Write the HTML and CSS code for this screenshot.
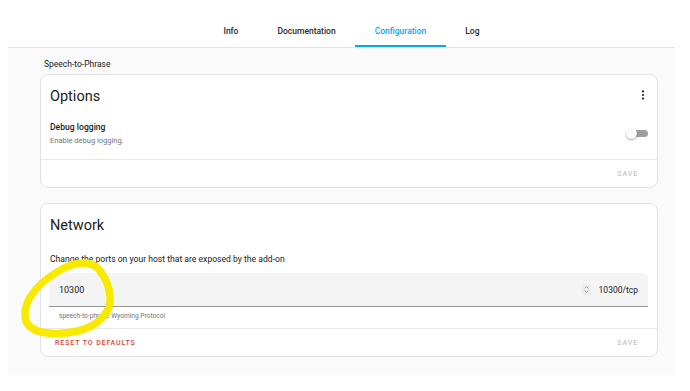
FILE: index.html
```html
<!DOCTYPE html>
<html lang="en">
<head>
  <meta charset="UTF-8">
  <meta name="viewport" content="width=device-width, initial-scale=1.0">
  <title>Speech-to-Phrase - Configuration</title>
  <link rel="stylesheet" href="styles.css">
</head>
<body>
  <div class="page">
    <div class="tabs">
      <div class="tab">Info</div>
      <div class="tab">Documentation</div>
      <div class="tab active">Configuration</div>
      <div class="tab">Log</div>
    </div>

    <div class="content">
      <div class="addon-name">Speech-to-Phrase</div>

      <div class="card">
        <div class="card-header">
          <span class="card-title">Options</span>
          <svg class="kebab" width="4" height="10" viewBox="0 0 4 10">
            <circle cx="2" cy="1.4" r="1.1" fill="#212121"/>
            <circle cx="2" cy="5" r="1.1" fill="#212121"/>
            <circle cx="2" cy="8.6" r="1.1" fill="#212121"/>
          </svg>
        </div>
        <div class="card-content">
          <div class="option-row">
            <div>
              <div class="option-name">Debug logging</div>
              <div class="option-desc">Enable debug logging.</div>
            </div>
            <div class="switch"><div class="knob"></div></div>
          </div>
        </div>
        <div class="card-actions">
          <span></span>
          <span class="btn disabled">Save</span>
        </div>
      </div>

      <div class="card">
        <div class="card-header">
          <span class="card-title">Network</span>
        </div>
        <div class="card-content">
          <div class="network-text">Change the ports on your host that are exposed by the add-on</div>
          <div class="field">
            <span class="field-value">10300</span>
            <svg class="spinner" width="9" height="11" viewBox="0 0 9 11">
              <rect width="9" height="11" rx="1" fill="#ececec"/>
              <path d="M2.8 4.3 L4.5 2.6 L6.2 4.3 M2.8 6.7 L4.5 8.4 L6.2 6.7" fill="none" stroke="#8a8a8a" stroke-width="0.8"/>
            </svg>
            <span class="field-suffix">10300/tcp</span>
          </div>
          <div class="field-helper">speech-to-phrase Wyoming Protocol</div>
        </div>
        <div class="card-actions">
          <span class="btn warning">Reset to defaults</span>
          <span class="btn disabled">Save</span>
        </div>
      </div>
    </div>
  </div>

  <!-- hand drawn highlight around the port field -->
  <svg class="scribble" width="690" height="391" viewBox="0 0 690 391">
    <path d="M101 273 C96 262 82 260 66 267 C42 279 23 298 25 317 C27 334 52 336 78 331 C99 326 112 311 110 296 C109 286 106 279 101 272"
          fill="none" stroke="#f7ea00" stroke-width="7.5" stroke-linecap="round"/>
  </svg>
</body>
</html>
```

FILE: styles.css
```css
body {
  margin: 0;
  background: #ffffff;
  font-family: Roboto, "Liberation Sans", sans-serif;
  color: #212121;
}
.page {
  margin-left: 8px;
  width: 667px;
}
.tabs {
  display: flex;
  justify-content: center;
  padding-left: 20px;
  border-bottom: 1px solid #e4e4e4;
}
.tab {
  padding: 26px 19.5px 9px;
  line-height: 10px;
  font-size: 8.5px;
  font-weight: 500;
  color: #2b2b2b;
  border-bottom: 2px solid transparent;
}
.tab.active {
  color: #03a9f4;
  border-bottom-color: #03a9f4;
}
.content {
  background: #fafafa;
  padding: 11px 17px 18px 32px;
}
.addon-name {
  font-size: 8.5px;
  line-height: 10px;
  padding-left: 4px;
  margin-bottom: 5px;
}
.card {
  background: #ffffff;
  border: 1px solid #e2e2e2;
  border-radius: 8px;
  margin-bottom: 15px;
}
.card:last-child { margin-bottom: 0; }
.card-header {
  display: flex;
  justify-content: space-between;
  align-items: flex-start;
  padding: 13px 12px 0 9px;
}
.card-title {
  font-size: 14.5px;
  line-height: 18px;
}
.kebab { margin-top: 2px; }
.card-content {
  padding: 0 9px 0 8px;
}
.option-row {
  display: flex;
  justify-content: space-between;
  align-items: center;
  padding: 15px 0 13px 1px;
}
.option-name {
  font-size: 8.6px;
  font-weight: 500;
  line-height: 12px;
}
.option-desc {
  font-size: 7.5px;
  line-height: 10px;
  margin-top: 3px;
  color: #737373;
}
.switch {
  position: relative;
  width: 21px;
  height: 7px;
  border-radius: 4px;
  background: #9e9e9e;
}
.knob {
  position: absolute;
  left: -1px;
  top: -2px;
  width: 11px;
  height: 11px;
  border-radius: 50%;
  background: #fafafa;
  box-shadow: 0 1px 2px rgba(0, 0, 0, 0.35);
}
.network-text {
  font-size: 8.6px;
  line-height: 11px;
  margin-top: 19px;
  padding-left: 1px;
}
.field {
  display: flex;
  align-items: center;
  height: 33px;
  margin-top: 8px;
  padding: 0 10px;
  background: #f4f4f4;
  border-radius: 4px 4px 0 0;
  border-bottom: 1px solid #949494;
}
.field-value {
  flex: 1;
  font-size: 9px;
}
.spinner { margin-right: 8px; }
.field-suffix {
  font-size: 8.5px;
}
.field-helper {
  font-size: 6.6px;
  line-height: 8px;
  color: #737373;
  margin-top: 5px;
  padding: 0 0 8px 10px;
}
.card-actions {
  display: flex;
  justify-content: space-between;
  align-items: center;
  height: 27px;
  padding: 0 19px 0 14px;
  border-top: 1px solid #e8e8e8;
}
.btn {
  font-size: 7px;
  font-weight: 500;
  letter-spacing: 0.9px;
  text-transform: uppercase;
}
.btn.disabled { color: #c4c4c4; }
.btn.warning { color: #db4437; }
.scribble {
  position: absolute;
  left: 0;
  top: 0;
  pointer-events: none;
}
```
